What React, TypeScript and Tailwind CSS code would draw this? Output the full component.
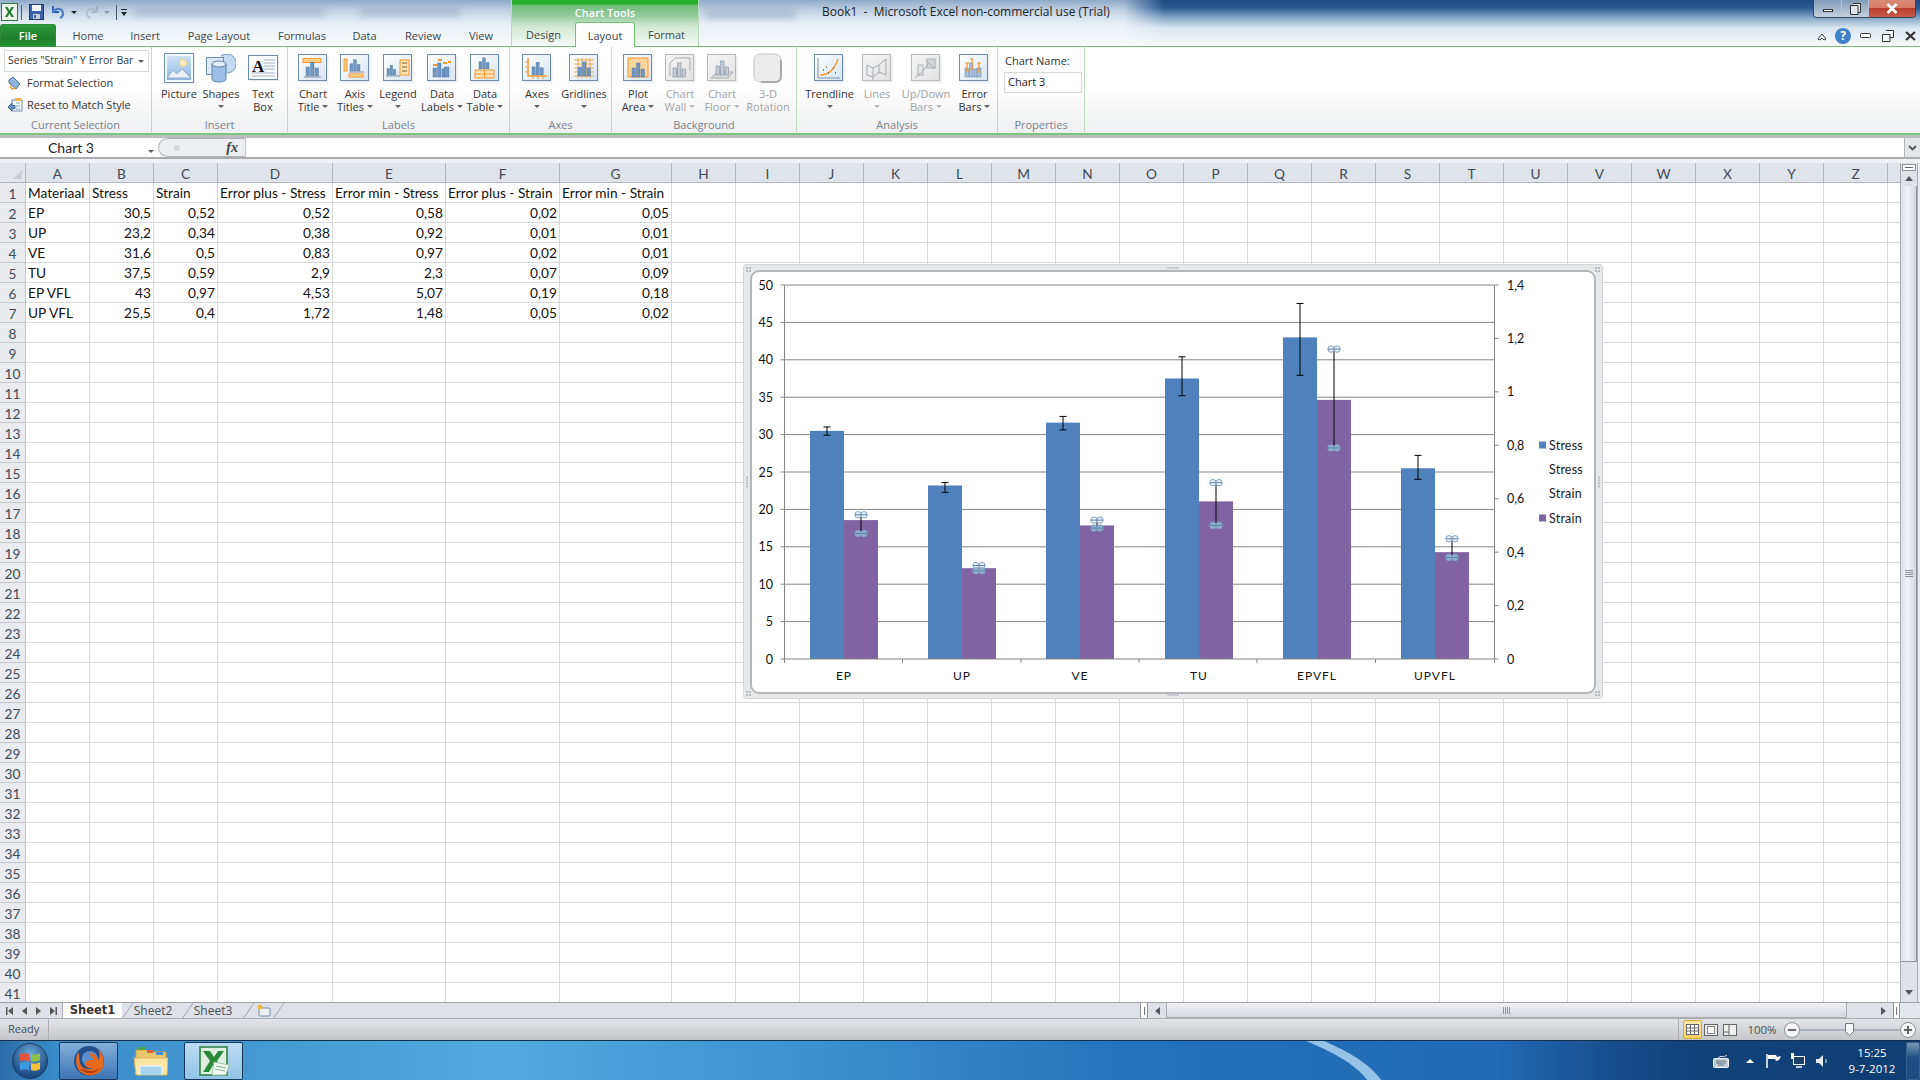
import { useId, type ReactNode } from "react";

type IconKind =
  | "title" | "axisTitles" | "legend" | "labels" | "table" | "axes" | "gridlines"
  | "plot" | "wall" | "floor" | "trend" | "lines" | "updown" | "errorbars";

const columns = ["A", "B", "C", "D", "E", "F", "G", "H", "I", "J", "K", "L", "M", "N", "O", "P", "Q", "R", "S", "T", "U", "V", "W", "X", "Y", "Z"];

const sheet: (string | null)[][] = [
  ["Materiaal", "Stress", "Strain", "Error plus - Stress", "Error min - Stress", "Error plus - Strain", "Error min - Strain"],
  ["EP", "30,5", "0,52", "0,52", "0,58", "0,02", "0,05"],
  ["UP", "23,2", "0,34", "0,38", "0,92", "0,01", "0,01"],
  ["VE", "31,6", "0,5", "0,83", "0,97", "0,02", "0,01"],
  ["TU", "37,5", "0,59", "2,9", "2,3", "0,07", "0,09"],
  ["EP VFL", "43", "0,97", "4,53", "5,07", "0,19", "0,18"],
  ["UP VFL", "25,5", "0,4", "1,72", "1,48", "0,05", "0,02"],
];

const series = [
  { name: "EP", label: "EP", x: 810, stress: 30.5, strain: 0.52, sp: 0.52, sm: 0.58, tp: 0.02, tm: 0.05 },
  { name: "UP", label: "UP", x: 928, stress: 23.2, strain: 0.34, sp: 0.38, sm: 0.92, tp: 0.01, tm: 0.01 },
  { name: "VE", label: "VE", x: 1046, stress: 31.6, strain: 0.5, sp: 0.83, sm: 0.97, tp: 0.02, tm: 0.01 },
  { name: "TU", label: "TU", x: 1165, stress: 37.5, strain: 0.59, sp: 2.9, sm: 2.3, tp: 0.07, tm: 0.09 },
  { name: "EPVFL", label: "EP VFL", x: 1283, stress: 43, strain: 0.97, sp: 4.53, sm: 5.07, tp: 0.19, tm: 0.18 },
  { name: "UPVFL", label: "UP VFL", x: 1401, stress: 25.5, strain: 0.4, sp: 1.72, sm: 1.48, tp: 0.05, tm: 0.02 },
];

const PLOT = { left: 784.5, right: 1494.5, top: 284.5, bottom: 658.5 };
const yStress = (v: number) => PLOT.bottom - (v / 50) * (PLOT.bottom - PLOT.top);
const yStrain = (v: number) => PLOT.bottom - (v / 1.4) * (PLOT.bottom - PLOT.top);

function Caret({ muted }: { muted?: boolean }) {
  return (
    <span className={`inline-block h-0 w-0 border-x-[3px] border-t-[3px] border-x-transparent ${muted ? "border-t-[#b5b8bc]" : "border-t-[#5a5f66]"}`} />
  );
}

function MiniBars({ x, y, color, scale = 1 }: { x: number; y: number; color: string; scale?: number }) {
  const heights = [9, 14, 8];
  return (
    <g>
      {heights.map((h, i) => (
        <rect key={i} x={x + i * 4.5 * scale} y={y - h * scale} width={3.5 * scale} height={h * scale} fill={color} stroke="#4d7199" strokeWidth={0.4} />
      ))}
    </g>
  );
}

function ChartIcon({ kind, disabled }: { kind: IconKind; disabled?: boolean }) {
  const id = useId();
  const bar = disabled ? "#c9cbce" : "#6f97c4";
  const accent = disabled ? "#c4c6c8" : "#f39a2c";
  const thin = disabled ? "#a9acb0" : "#7a8ea6";
  let inner: ReactNode = null;
  switch (kind) {
    case "title":
      inner = (<><rect x="5" y="4.500" width="18" height="4" fill="#fbd08a" stroke={accent} /><MiniBars x={8} y={22} color={bar} /><path d="M6 23h17" stroke={thin} /></>);
      break;
    case "axisTitles":
      inner = (<><rect x="4" y="5" width="3" height="12" fill="#fbd08a" stroke={accent} /><rect x="9" y="20" width="14" height="3" fill="#fbd08a" stroke={accent} /><MiniBars x={10} y={17} color={bar} scale={0.8} /><path d="M9 18h15" stroke={thin} /></>);
      break;
    case "legend":
      inner = (<><rect x="17" y="6" width="9" height="15" fill="#fde3b5" stroke={accent} /><path d="M19 9h5M19 13h5M19 17h5" stroke="#8a5a22" /><MiniBars x={4} y={21} color={bar} scale={0.7} /><path d="M3 22h14" stroke={thin} /></>);
      break;
    case "labels":
      inner = (<><MiniBars x={6} y={23} color={bar} scale={1} /><rect x="17" y="13" width="5" height="10" fill={bar} stroke="#4d7199" strokeWidth="0.4" /><path d="M6 11h4M11 6h4M16 9h4M21 8h3" stroke={accent} strokeWidth="2" /></>);
      break;
    case "table":
      inner = (<><MiniBars x={9} y={15} color={bar} scale={0.8} /><rect x="5" y="16" width="19" height="8" fill="#fde3b5" stroke={accent} /><path d="M5 20h19M14.500 16v8" stroke={accent} /></>);
      break;
    case "axes":
      inner = (<><MiniBars x={10} y={21} color={bar} scale={0.9} /><path d="M6 4v18h19" fill="none" stroke={accent} strokeWidth="1.500" /><path d="M3 8h3M3 13h3M3 18h3M11 22v3M16 22v3M21 22v3" stroke={accent} /></>);
      break;
    case "gridlines":
      inner = (<><path d="M5 6h20M5 10h20M5 14h20M5 18h20M5 22h20M9 4v20M13 4v20M17 4v20M21 4v20" stroke={accent} strokeWidth="0.800" /><MiniBars x={9} y={22} color={bar} /></>);
      break;
    case "plot":
      inner = (<><rect x="5" y="4" width="20" height="19" fill="#fcd59a" stroke={accent} /><MiniBars x={9} y={23} color={bar} /></>);
      break;
    case "wall":
      inner = (<><path d="M5 22V9l5-5h15v13" fill="none" stroke={thin} /><MiniBars x={8} y={23} color={bar} /></>);
      break;
    case "floor":
      inner = (<><path d="M4 24l6-6h16l-5 6z" fill="#ddd" stroke={thin} /><MiniBars x={9} y={21} color={bar} /></>);
      break;
    case "trend":
      inner = (<><path d="M4 4v20h22" fill="none" stroke={thin} /><path d="M6 21c8 0 14-4 18-16" fill="none" stroke={accent} strokeWidth="1.300" /><path d="M9 16h1M14 19h1M19 14h1M21 19h1M12 13h1" stroke="#222" strokeWidth="1.200" /></>);
      break;
    case "lines":
      inner = <path d="M5 21V11l6 3 6-3 7-6v16l-7-3-6 5zM11 14v12M17 11v9" fill="none" stroke={thin} />;
      break;
    case "updown":
      inner = (<><rect x="16" y="5" width="8" height="9" fill="#d5d6d8" stroke={thin} /><rect x="7" y="11" width="5" height="10" fill="#e5e6e8" stroke={thin} /><path d="M4 24l8-7 6-8 6 6" fill="none" stroke={thin} /></>);
      break;
    case "errorbars":
      inner = (<><MiniBars x={6} y={23} color="#a9c0dc" /><rect x="18" y="14" width="4" height="9" fill="#a9c0dc" stroke="#4d7199" strokeWidth="0.4" /><path d="M8 9v8M6 9h4M6 17h4M13 5v10M11 5h4M11 15h4M20 9v9M18 9h4M18 18h4" stroke={accent} strokeWidth="1.200" fill="none" /></>);
      break;
  }
  return (
    <svg width="31" height="29" viewBox="0 0 31 29" className="shrink-0">
      <defs>
        <linearGradient id={id} x1="0" y1="0" x2="1" y2="1">
          <stop offset="0" stopColor={disabled ? "#f5f5f5" : "#ffffff"} />
          <stop offset="1" stopColor={disabled ? "#e2e2e2" : "#d6e4f3"} />
        </linearGradient>
      </defs>
      <rect x="2" y="2" width="28.500" height="26.500" fill="#000" opacity="0.08" />
      <rect x="0.500" y="0.500" width="28" height="26" fill={`url(#${id})`} stroke={disabled ? "#b8b9bb" : "#6f8cad"} />
      {inner}
    </svg>
  );
}

function RibbonButton({ icon, lines, width, caret, disabled, soloCaret }: { icon: ReactNode; lines: string[]; width: string; caret?: boolean; disabled?: boolean; soloCaret?: boolean }) {
  return (
    <div className={`flex shrink-0 flex-col items-center ${width} ${disabled ? "text-[#a0a2a5]" : "text-[#333]"}`}>
      <div className="flex h-[30px] items-center justify-center">{icon}</div>
      <div className="mt-[4px] flex h-[13px] items-center whitespace-nowrap leading-[13px]">{lines[0]}</div>
      <div className="flex h-[13px] items-center gap-[3px] whitespace-nowrap leading-[13px]">
        {lines[1]}
        {(caret || soloCaret) && <Caret muted={disabled} />}
      </div>
    </div>
  );
}

function RibbonGroup({ label, width, children, padding = "pl-[5px]" }: { label: string; width: string; children: ReactNode; padding?: string }) {
  return (
    <div className={`flex h-full shrink-0 flex-col border-r border-[#bcdcbd] ${width}`}>
      <div className={`flex h-[70px] pt-[6px] ${padding}`}>{children}</div>
      <div className="mt-auto pb-px text-center leading-[14px] text-[#76828f]">{label}</div>
    </div>
  );
}

function PictureIcon() {
  return (
    <svg width="31" height="31" viewBox="0 0 31 31">
      <defs>
        <linearGradient id="picSky" x1="0" y1="0" x2="0" y2="1">
          <stop offset="0" stopColor="#cfe2f6" />
          <stop offset="1" stopColor="#8db6e0" />
        </linearGradient>
      </defs>
      <rect x="2" y="2" width="29" height="29" fill="#000" opacity="0.08" />
      <rect x="0.500" y="0.500" width="29" height="29" fill="#f4f8fc" stroke="#6f8fb3" />
      <rect x="3" y="3" width="24" height="24" fill="url(#picSky)" />
      <circle cx="19" cy="10" r="3.500" fill="#fff3c4" stroke="#eecf7c" />
      <path d="M3 25l6-8 4 4 5-5 9 9z" fill="#e8f0f8" stroke="#93aecd" />
    </svg>
  );
}

function ShapesIcon() {
  return (
    <svg width="30" height="29" viewBox="0 0 30 29">
      <path d="M15 2a9.500 9.500 0 1 1 6 17" fill="#c4daf2" stroke="#6f8fb3" />
      <rect x="0.500" y="3.500" width="17" height="17" fill="#dce9f7" stroke="#6f8fb3" />
      <path d="M6 10v15c0 4 14 4 14 0V10z" fill="#9cc0e6" stroke="#5f82aa" />
      <ellipse cx="13" cy="10" rx="7" ry="3" fill="#e2eefa" stroke="#5f82aa" />
    </svg>
  );
}

function TextBoxIcon() {
  return (
    <svg width="31" height="26" viewBox="0 0 31 26">
      <rect x="2" y="2" width="29" height="24" fill="#000" opacity="0.08" />
      <rect x="0.500" y="0.500" width="29" height="24" fill="#fbfcfe" stroke="#6f8cad" />
      <text x="4" y="17" fontFamily="Liberation Serif, serif" fontWeight="700" fontSize="17" fill="#111">A</text>
      <path d="M16 5h11M16 8h11M16 11h11M16 14h11M4 18h23M4 21h23" stroke="#a4b3c4" />
    </svg>
  );
}

function RotationIcon() {
  return (
    <svg width="30" height="30" viewBox="0 0 30 30">
      <rect x="1" y="1" width="27" height="28" rx="6" fill="#ececec" stroke="#c2c3c5" />
      <path d="M28 7v16c0 4-2 6-6 6H8" fill="none" stroke="#a8a9ab" strokeWidth="2" />
    </svg>
  );
}

function QuickAccess() {
  return (
    <div className="flex h-[24px] items-center">
      <svg width="17" height="18" viewBox="0 0 17 18" className="ml-[1px]">
        <rect x="0.500" y="0.500" width="16" height="17" fill="#eaf4ea" stroke="#2f7d38" />
        <path d="M4 4l3 5-3 5h2.500l2-3.500 2 3.500H13l-3.200-5L13 4h-2.500L8.500 7.500 6.500 4z" fill="#1e7a2c" />
      </svg>
      <span className="ml-[3px] h-[15px] w-px bg-[#4a5a6b]" />
      <svg width="15" height="16" viewBox="0 0 15 16" className="ml-[7px]">
        <rect x="0.500" y="0.500" width="14" height="15" fill="#3a62a8" stroke="#1e3a6e" />
        <rect x="3" y="1" width="9" height="6" fill="#f4f7fb" />
        <rect x="4" y="10" width="7" height="5" fill="#c7cbd2" />
        <rect x="5" y="11" width="2" height="3" fill="#3a62a8" />
      </svg>
      <svg width="16" height="16" viewBox="0 0 16 16" className="ml-[6px]">
        <path d="M3 2v6h6" fill="none" stroke="#2f62a8" strokeWidth="2" />
        <path d="M3 8c3-5 10-4 10 2 0 2-1 3-3 4" fill="none" stroke="#4a7fc4" strokeWidth="2.200" />
      </svg>
      <span className="ml-[5px]"><span className="block h-0 w-0 border-x-[3px] border-t-[3px] border-x-transparent border-t-[#222]" /></span>
      <svg width="16" height="16" viewBox="0 0 16 16" className="ml-[7px] opacity-50">
        <path d="M13 2v6H7" fill="none" stroke="#8b99a8" strokeWidth="2" />
        <path d="M13 8C10 3 3 4 3 10c0 2 1 3 3 4" fill="none" stroke="#9aa8b6" strokeWidth="2.200" />
      </svg>
      <span className="ml-[4px]"><span className="block h-0 w-0 border-x-[3px] border-t-[3px] border-x-transparent border-t-[#8c97a3]" /></span>
      <span className="ml-[6px] h-[15px] w-px bg-[#4a5a6b]" />
      <span className="ml-[4px] flex flex-col items-center gap-[2px]">
        <span className="h-px w-[6px] bg-[#222]" />
        <span className="block h-0 w-0 border-x-[3px] border-t-[4px] border-x-transparent border-t-[#222]" />
      </span>
    </div>
  );
}

function Tab({ label, width, active }: { label: string; width: string; active?: boolean }) {
  return (
    <div className={`flex shrink-0 items-center justify-center pt-[2px] ${width} ${active ? "mb-[-1px] h-[25px] rounded-t-[3px] border-x border-t border-[#72c172] bg-[#fdfefd]" : "h-[24px]"} text-[#3f444a]`}>
      {label}
    </div>
  );
}

function TitleBar() {
  return (
    <div className="relative z-10 flex h-[47px] shrink-0 border-b border-[#6fbe72] bg-[linear-gradient(180deg,#8eaac8_0px,#c2d3e5_11px,#e8eff6_24px,#f8fafc_46px)] [font-family:'Open_Sans',sans-serif] text-[11px]">
      <div className="relative flex w-[511px] shrink-0 flex-col">
        <div className="absolute left-[135px] top-[9px] h-[7px] w-[190px] bg-[#5f7c9c]/30 blur-[3px]" />
        <div className="absolute left-[360px] top-[9px] h-[7px] w-[100px] bg-[#5f7c9c]/30 blur-[3px]" />
        <div className="relative">
          <QuickAccess />
        </div>
        <div className="relative flex h-[23px] items-end">
          <div className="flex h-[23px] w-[56px] shrink-0 items-center justify-center rounded-t-[3px] border border-b-0 border-[#2f8b3a] bg-[linear-gradient(180deg,#2e9a3c,#1f7d2d_60%,#2a9639)] pt-px font-semibold text-white">
            File
          </div>
          <Tab label="Home" width="w-[64px]" />
          <Tab label="Insert" width="w-[50px]" />
          <Tab label="Page Layout" width="w-[98px]" />
          <Tab label="Formulas" width="w-[68px]" />
          <Tab label="Data" width="w-[57px]" />
          <Tab label="Review" width="w-[60px]" />
          <Tab label="View" width="w-[56px]" />
        </div>
      </div>
      <div className="flex w-[188px] shrink-0 flex-col border-x border-[#b6dcb8] bg-[linear-gradient(180deg,#22b026_0px,#22b026_4px,#6dbb78_5px,#94cc9c_16px,#cfe8d3_26px,#f6fbf7_46px)]">
        <div className="flex h-[24px] items-center justify-center pt-[4px] font-semibold text-white">Chart Tools</div>
        <div className="flex h-[23px] items-end">
          <Tab label="Design" width="w-[63px]" />
          <Tab label="Layout" width="w-[60px]" active />
          <Tab label="Format" width="w-[63px]" />
        </div>
      </div>
      <div className="relative flex min-w-0 flex-1 flex-col">
        <div className="absolute inset-0 bg-[linear-gradient(180deg,#21497f_0px,#2a5a92_8px,#7ea2c5_17px,#dbe6f0_28px,#f6f8fb_46px)] [mask-image:linear-gradient(90deg,transparent_425px,black_465px)]" />
        <div className="absolute left-[6px] top-[10px] h-[8px] w-[90px] bg-[#5f7c9c]/30 blur-[3px]" />
        <div className="relative flex h-[24px] items-start">
          <div className="pl-[123px] pt-[3px] text-[12px] leading-[18px] whitespace-nowrap text-[#222]">Book1&nbsp; -&nbsp; Microsoft Excel non-commercial use (Trial)</div>
          <div className="ml-auto mr-[4px] flex h-[18px] overflow-hidden rounded-b-[4px] border border-t-0 border-[#33475f]">
            <div className="flex w-[28px] items-center justify-center border-r border-[#b5c3d2] bg-[linear-gradient(180deg,#7f9ab8,#c6d3e0)]"><span className="mt-[4px] h-[3px] w-[10px] border border-[#333] bg-white" /></div>
            <div className="flex w-[27px] items-center justify-center border-r border-[#b5c3d2] bg-[linear-gradient(180deg,#7f9ab8,#c6d3e0)]">
              <svg width="11" height="12" viewBox="0 0 11 12"><path d="M3 .5h7.500v9H8M.5 2.500h7.500v9H.5z" fill="#dfe6ee" stroke="#333" /></svg>
            </div>
            <div className="flex w-[46px] items-center justify-center bg-[linear-gradient(180deg,#d88a76_0%,#d87f6a_45%,#b8402c_50%,#c95a46_100%)]">
              <svg width="12" height="11" viewBox="0 0 12 11"><path d="M1.500 1l9 9M10.500 1l-9 9" stroke="#fff" strokeWidth="2.600" /></svg>
            </div>
          </div>
        </div>
        <div className="relative flex h-[22px] items-center justify-end pr-[4px] pt-[2px] text-[#444]">
          <svg width="10" height="9" viewBox="0 0 10 9"><path d="M1 7l4-5 4 5-2 1-2-2-2 2z" fill="#fff" stroke="#333" /></svg>
          <span className="ml-[8px] flex h-[16px] w-[16px] items-center justify-center rounded-full bg-[#3f82c8] text-[12px] font-bold leading-none text-white">?</span>
          <svg width="12" height="6" viewBox="0 0 12 6" className="ml-[9px]"><rect x="0.500" y="0.500" width="10" height="4" rx="1" fill="#fff" stroke="#333" /></svg>
          <svg width="12" height="13" viewBox="0 0 12 13" className="ml-[10px]"><path d="M4 .5h7.500v7H8M.5 4.500h7.500v7H.5z" fill="#f2f5f8" stroke="#333" /></svg>
          <svg width="11" height="10" viewBox="0 0 11 10" className="ml-[11px]"><path d="M1 1l9 8M10 1L1 9" stroke="#333" strokeWidth="2.200" /></svg>
        </div>
      </div>
    </div>
  );
}

function Ribbon() {
  return (
    <div className="flex h-[86px] shrink-0 bg-[linear-gradient(180deg,#fff_0%,#fff_50%,#f7f7f7_70%,#eff0f2_100%)] [font-family:'Open_Sans',sans-serif] text-[11px]">
      <div className="flex h-full w-[152px] shrink-0 flex-col border-r border-[#bcdcbd]">
        <div className="ml-[4px] mt-[3px] flex h-[22px] w-[145px] items-center justify-between border border-[#d5d8db] bg-white pl-[3px] pr-[4px] text-[10.5px] whitespace-nowrap text-[#333]">
          Series "Strain" Y Error Bar
          <Caret />
        </div>
        <div className="mt-px flex h-[20px] items-center gap-[4px] pl-[7px] text-[#333]">
          <svg width="16" height="16" viewBox="0 0 16 16"><path d="M2 5l4-3 7 7-4 5-7-6z" fill="#8fb3dc" stroke="#4b6f9c" /><path d="M3 11l2 3 3-1" fill="none" stroke="#e2a23b" strokeWidth="1.500" /></svg>
          Format Selection
        </div>
        <div className="mt-[2px] flex h-[20px] items-center gap-[4px] pl-[7px] text-[#333]">
          <svg width="16" height="16" viewBox="0 0 16 16"><rect x="5" y="3" width="10" height="11" fill="#f4f7fb" stroke="#6f8cad" /><path d="M9 6h4M9 9h4M9 12h4" stroke="#8aa" /><path d="M1 10l4-4v2.500h3v3H5V14z" fill="#6b93c8" stroke="#3f6592" /><rect x="8" y="1" width="6" height="3" fill="#e7b64c" /></svg>
          Reset to Match Style
        </div>
        <div className="mt-auto pb-px text-center leading-[14px] text-[#76828f]">Current Selection</div>
      </div>
      <RibbonGroup label="Insert" width="w-[136px]" padding="pl-[6px]">
        <RibbonButton width="w-[42px]" icon={<PictureIcon />} lines={["Picture", "\u00a0"]} />
        <RibbonButton width="w-[42px]" icon={<ShapesIcon />} lines={["Shapes", ""]} soloCaret />
        <RibbonButton width="w-[42px]" icon={<TextBoxIcon />} lines={["Text", "Box"]} />
      </RibbonGroup>
      <RibbonGroup label="Labels" width="w-[222px]" padding="pl-[4px]">
        <RibbonButton width="w-[42px]" icon={<ChartIcon kind="title" />} lines={["Chart", "Title"]} caret />
        <RibbonButton width="w-[42px]" icon={<ChartIcon kind="axisTitles" />} lines={["Axis", "Titles"]} caret />
        <RibbonButton width="w-[44px]" icon={<ChartIcon kind="legend" />} lines={["Legend", ""]} soloCaret />
        <RibbonButton width="w-[44px]" icon={<ChartIcon kind="labels" />} lines={["Data", "Labels"]} caret />
        <RibbonButton width="w-[42px]" icon={<ChartIcon kind="table" />} lines={["Data", "Table"]} caret />
      </RibbonGroup>
      <RibbonGroup label="Axes" width="w-[102px]">
        <RibbonButton width="w-[44px]" icon={<ChartIcon kind="axes" />} lines={["Axes", ""]} soloCaret />
        <RibbonButton width="w-[50px]" icon={<ChartIcon kind="gridlines" />} lines={["Gridlines", ""]} soloCaret />
      </RibbonGroup>
      <RibbonGroup label="Background" width="w-[185px]">
        <RibbonButton width="w-[42px]" icon={<ChartIcon kind="plot" />} lines={["Plot", "Area"]} caret />
        <RibbonButton width="w-[42px]" icon={<ChartIcon kind="wall" disabled />} lines={["Chart", "Wall"]} caret disabled />
        <RibbonButton width="w-[42px]" icon={<ChartIcon kind="floor" disabled />} lines={["Chart", "Floor"]} caret disabled />
        <RibbonButton width="w-[50px]" icon={<RotationIcon />} lines={["3-D", "Rotation"]} disabled />
      </RibbonGroup>
      <RibbonGroup label="Analysis" width="w-[201px]">
        <RibbonButton width="w-[55px]" icon={<ChartIcon kind="trend" />} lines={["Trendline", ""]} soloCaret />
        <RibbonButton width="w-[40px]" icon={<ChartIcon kind="lines" disabled />} lines={["Lines", ""]} soloCaret disabled />
        <RibbonButton width="w-[58px]" icon={<ChartIcon kind="updown" disabled />} lines={["Up/Down", "Bars"]} caret disabled />
        <RibbonButton width="w-[39px]" icon={<ChartIcon kind="errorbars" />} lines={["Error", "Bars"]} caret />
      </RibbonGroup>
      <div className="flex h-full w-[87px] shrink-0 flex-col border-r border-[#bcdcbd]">
        <div className="mt-[6px] pl-[7px] leading-[16px] text-[#333]">Chart Name:</div>
        <div className="ml-[6px] mt-[3px] flex h-[21px] w-[78px] items-center border border-[#d5d8db] bg-white px-[3px] text-[#222]">Chart 3</div>
        <div className="mt-auto pb-px text-center leading-[14px] text-[#76828f]">Properties</div>
      </div>
    </div>
  );
}

function FormulaBar() {
  return (
    <div className="flex h-[30px] shrink-0 flex-col">
      <div className="h-[2px] bg-[#7dc57f]" />
      <div className="h-[3px] bg-[#b9bdc2]" />
      <div className="flex h-[21px] border-b-[2px] border-[#a9adb2] bg-white">
        <div className="flex w-[158px] items-center [font-family:Lato,sans-serif] text-[14px] text-[#222]">
          <span className="w-[142px] text-center">Chart 3</span>
          <span className="ml-[6px]"><Caret /></span>
        </div>
        <div className="flex w-[87px] items-center justify-end rounded-l-full border-y border-l border-[#b0b4b9] bg-[#eceef1] pr-[7px]">
          <span className="mr-[46px] h-[6px] w-[6px] rounded-full bg-[#d5d8dc]" />
          <span className="[font-family:'Liberation_Serif',serif] text-[14px] font-bold italic leading-none text-[#444]">fx</span>
        </div>
        <div className="flex-1 border-l border-[#c5c8cc]" />
        <div className="flex w-[16px] items-center justify-center border-l border-[#b0b4b9] bg-[#e4e6ea]">
          <svg width="9" height="6" viewBox="0 0 9 6"><path d="M1 1l3.500 3.500L8 1" fill="none" stroke="#555" strokeWidth="1.800" /></svg>
        </div>
      </div>
      <div className="h-[4px] bg-[#eef0f3]" />
    </div>
  );
}

function ErrorBar({ x, top, bottom }: { x: number; top: number; bottom: number }) {
  return <path d={`M${x} ${top}V${bottom}M${x - 3.500} ${top}h7M${x - 3.500} ${bottom}h7`} stroke="#000" strokeWidth="1" fill="none" />;
}

function Handle({ x, y, filled }: { x: number; y: number; filled?: boolean }) {
  const fill = filled ? "#8fb0cf" : "#eaf2fa";
  return (
    <g stroke="#7ea3c5" strokeWidth="1" fill={fill}>
      <circle cx={x - 3} cy={y} r={3.200} />
      <circle cx={x + 3} cy={y} r={3.200} />
      <path d={`M${x - 6} ${y}h12`} stroke="#5f7f9f" />
    </g>
  );
}

function ChartSvg() {
  const stressTicks = [0, 5, 10, 15, 20, 25, 30, 35, 40, 45, 50];
  const strainTicks = ["0", "0,2", "0,4", "0,6", "0,8", "1", "1,2", "1,4"];
  const catTicks = [784.5, 902.5, 1021, 1139, 1257, 1375.5, 1494.5];
  const legend = [
    { y: 445, text: "Stress", color: "#4f81bd" },
    { y: 469, text: "Stress" },
    { y: 493, text: "Strain" },
    { y: 518, text: "Strain", color: "#8064a2" },
  ];
  return (
    <svg width="844" height="420" viewBox="752 271.500 844 420" className="block [font-family:Lato,sans-serif]">
      {stressTicks.slice(1).map((t) => (
        <path key={t} d={`M${PLOT.left} ${yStress(t)}H${PLOT.right}`} stroke="#868686" strokeWidth="1" />
      ))}
      {series.map((s) => (
        <g key={s.name}>
          <rect x={s.x} y={yStress(s.stress)} width={34} height={PLOT.bottom - yStress(s.stress)} fill="#4f81bd" />
          <rect x={s.x + 34} y={yStrain(s.strain)} width={34} height={PLOT.bottom - yStrain(s.strain)} fill="#8064a2" />
        </g>
      ))}
      <path d={`M${PLOT.left} ${PLOT.top - 0}V${PLOT.bottom}H${PLOT.right}V${PLOT.top}`} fill="none" stroke="#868686" strokeWidth="1" />
      {stressTicks.map((t) => (
        <g key={t}>
          <path d={`M${PLOT.left - 4} ${yStress(t)}h4`} stroke="#868686" />
          <text x="773" y={yStress(t) + 4.500} textAnchor="end" fontSize="12.5" fill="#111">{t}</text>
        </g>
      ))}
      {strainTicks.map((t, i) => {
        const y = yStrain(i * 0.2);
        return (
          <g key={t}>
            <path d={`M${PLOT.right} ${y}h4`} stroke="#868686" />
            <text x="1507" y={y + 4.500} fontSize="12.5" fill="#111">{t}</text>
          </g>
        );
      })}
      {catTicks.map((x) => (
        <path key={x} d={`M${x} ${PLOT.bottom}v4`} stroke="#868686" />
      ))}
      {series.map((s) => {
        const bx = s.x + 17;
        const px = s.x + 51;
        const top = yStrain(s.strain + s.tp);
        const bottom = yStrain(s.strain - s.tm);
        return (
          <g key={s.name}>
            <ErrorBar x={bx} top={yStress(s.stress + s.sp)} bottom={yStress(s.stress - s.sm)} />
            <path d={`M${px} ${top}V${bottom}`} stroke="#000" />
            <Handle x={px} y={top} />
            <Handle x={px} y={bottom} filled />
            <text x={s.x + 34} y="679" textAnchor="middle" fontSize="12" letterSpacing="1" wordSpacing="-3.500" fill="#111">{s.label}</text>
          </g>
        );
      })}
      {legend.map((l) => (
        <g key={l.y}>
          {l.color && <rect x="1539" y={l.y - 4} width="7" height="7" fill={l.color} />}
          <text x="1549" y={l.y + 4} fontSize="12.5" letterSpacing="0.200" fill="#222">{l.text}</text>
        </g>
      ))}
    </svg>
  );
}

function GripDots({ vertical }: { vertical?: boolean }) {
  return (
    <span className={`flex gap-px ${vertical ? "flex-col" : ""}`}>
      <span className="h-[2px] w-[2px] bg-[#b9bdc3]" />
      <span className="h-[2px] w-[2px] bg-[#b9bdc3]" />
      <span className="h-[2px] w-[2px] bg-[#b9bdc3]" />
      <span className="h-[2px] w-[2px] bg-[#b9bdc3]" />
    </span>
  );
}

function CornerDots({ place }: { place: string }) {
  return (
    <span className={`absolute grid grid-cols-2 gap-px ${place}`}>
      <span className="h-[2px] w-[2px] bg-[#b9bdc3]" />
      <span className="h-[2px] w-[2px] bg-[#b9bdc3]" />
      <span className="h-[2px] w-[2px] bg-[#b9bdc3]" />
      <span className="h-[2px] w-[2px] bg-[#b9bdc3]" />
    </span>
  );
}

function ChartObject() {
  return (
    <div className="absolute left-[744px] top-[102px] flex h-[433px] w-[858px] items-center justify-center rounded-[3px] border-[6px] border-[#e6e8ea] bg-[#eef0f2] shadow-[0_0_0_1px_#d3d5d8]">
      <div className="overflow-hidden rounded-[9px] border-2 border-[#b4b6b9] bg-white">
        <ChartSvg />
      </div>
      <span className="absolute left-1/2 top-[-4px] -translate-x-1/2"><GripDots /></span>
      <span className="absolute bottom-[-4px] left-1/2 -translate-x-1/2"><GripDots /></span>
      <span className="absolute left-[-4px] top-1/2 -translate-y-1/2"><GripDots vertical /></span>
      <span className="absolute right-[-4px] top-1/2 -translate-y-1/2"><GripDots vertical /></span>
      <CornerDots place="left-[-4px] top-[-4px]" />
      <CornerDots place="right-[-4px] top-[-4px]" />
      <CornerDots place="bottom-[-4px] left-[-4px]" />
      <CornerDots place="bottom-[-4px] right-[-4px]" />
    </div>
  );
}

function SheetGrid() {
  const rows = Array.from({ length: 41 }, (_, i) => i);
  return (
    <div className="relative grid min-w-0 flex-1 grid-cols-[26px_64px_64px_64px_115px_113px_114px_112px_repeat(19,64px)_12px] auto-rows-[20px] content-start overflow-hidden bg-white [font-family:Lato,sans-serif] text-[13.7px] leading-[19px] text-[#111]">
      <div className="flex items-end justify-end border-b border-r border-[#b3b7bd] bg-[#e2e5ea] pb-[3px] pr-[3px]">
        <span className="h-0 w-0 border-b-[9px] border-l-[9px] border-b-[#c9ccd1] border-l-transparent" />
      </div>
      {columns.map((c) => (
        <div key={c} className="flex items-center justify-center border-b border-r border-[#b3b7bd] bg-[#dfe3ea] pt-px text-[#3f4a57]">{c}</div>
      ))}
      <div className="border-b border-[#b3b7bd] bg-[#dfe3ea]" />
      {rows.map((r) => (
        <RowCells key={r} index={r} />
      ))}
      <ChartObject />
    </div>
  );
}

function RowCells({ index }: { index: number }) {
  const data = sheet[index];
  return (
    <>
      <div className="flex items-center justify-center border-b border-r border-[#c5c8cd] bg-[#e9ebef] pt-px text-[#3f4a57]">{index + 1}</div>
      {columns.map((c, i) => {
        const value = data ? data[i] : undefined;
        const numeric = !!value && index > 0 && i > 0;
        return (
          <div key={c} className={`overflow-visible whitespace-nowrap border-b border-r border-[#d9d9d9] px-[2px] ${numeric ? "text-right" : ""}`}>{value}</div>
        );
      })}
      <div className="border-b border-[#d9d9d9]" />
    </>
  );
}

function VerticalScroll() {
  return (
    <div className="flex w-[20px] shrink-0 border-l border-[#a9adb2] bg-[#dfe2e9]">
      <div className="flex w-[16px] shrink-0 flex-col items-center">
        <div className="mt-[1px] flex h-[7px] w-[14px] items-center justify-center border border-[#8f949b] bg-white"><span className="h-px w-[8px] bg-[#666]" /></div>
        <span className="mt-[5px] h-0 w-0 border-x-[4px] border-b-[5px] border-x-transparent border-b-[#555]" />
        <div className="mt-[5px] flex h-[776px] w-full items-center justify-center border-b border-r border-[#8e939a] bg-[linear-gradient(90deg,#dde1e7,#f1f3f6_45%,#d2d6dc)]">
          <span className="flex flex-col gap-px">
            <span className="h-px w-[8px] bg-[#8d9198]" />
            <span className="h-px w-[8px] bg-[#8d9198]" />
            <span className="h-px w-[8px] bg-[#8d9198]" />
            <span className="h-px w-[8px] bg-[#8d9198]" />
          </span>
        </div>
        <span className="mt-auto mb-[7px] h-0 w-0 border-x-[4px] border-t-[5px] border-x-transparent border-t-[#555]" />
      </div>
      <div className="w-px shrink-0 bg-[#a9adb2]" />
      <div className="flex-1 bg-[#e9ebef]" />
    </div>
  );
}

function Slant() {
  return (
    <svg width="11" height="16" viewBox="0 0 11 16" className="shrink-0">
      <path d="M0 16L11 0" stroke="#a3a7ad" fill="none" />
    </svg>
  );
}

function SheetTabs() {
  return (
    <div className="flex h-[16px] shrink-0 border-t border-[#a0a4a9] bg-[#dee1e7] [font-family:'Open_Sans',sans-serif] text-[12px] text-[#4a4f56]">
      <div className="flex w-[63px] shrink-0 items-center border-r border-[#a9adb2] pl-[6px] text-[#444]">
        <svg width="52" height="10" viewBox="0 0 52 10" fill="#555">
          <path d="M0 1h1.500v8H0zM7 1v8L2 5z" />
          <path d="M21 1v8l-5-4z" />
          <path d="M30 1v8l5-4z" />
          <path d="M44 1v8l5-4zM49.500 1H51v8h-1.500z" />
        </svg>
      </div>
      <div className="flex w-[59px] shrink-0 items-center justify-center bg-white font-bold text-[#333] [font-family:'DejaVu_Sans',sans-serif] text-[11.5px]">Sheet1</div>
      <Slant />
      <div className="flex w-[49px] shrink-0 items-center justify-center pr-[9px]">Sheet2</div>
      <Slant />
      <div className="flex w-[50px] shrink-0 items-center justify-center pr-[10px]">Sheet3</div>
      <Slant />
      <div className="flex w-[19px] shrink-0 items-center justify-center">
        <svg width="14" height="13" viewBox="0 0 14 13"><rect x="2" y="4" width="11" height="8" rx="1" fill="#eef2f7" stroke="#6f8cad" /><circle cx="3" cy="3" r="2.500" fill="#f0b93f" /></svg>
      </div>
      <Slant />
      <div className="flex-1" />
      <div className="flex w-[8px] shrink-0 items-center justify-center border-x border-[#8f949b] bg-white"><span className="h-[8px] w-px bg-[#777]" /></div>
      <div className="flex w-[18px] shrink-0 items-center justify-center"><span className="h-0 w-0 border-y-[4px] border-r-[5px] border-y-transparent border-r-[#555]" /></div>
      <div className="flex w-[681px] shrink-0 items-center justify-center border-b border-l border-r border-[#a9adb2] bg-[linear-gradient(180deg,#f0f2f5,#d4d8de)]">
        <span className="flex gap-px">
          <span className="h-[7px] w-px bg-[#8d9198]" />
          <span className="h-[7px] w-px bg-[#8d9198]" />
          <span className="h-[7px] w-px bg-[#8d9198]" />
          <span className="h-[7px] w-px bg-[#8d9198]" />
        </span>
      </div>
      <div className="flex w-[46px] shrink-0 items-center justify-end pr-[7px]"><span className="h-0 w-0 border-y-[4px] border-l-[5px] border-y-transparent border-l-[#555]" /></div>
      <div className="flex w-[7px] shrink-0 items-center justify-center border-x border-[#8f949b] bg-white"><span className="h-[8px] w-px bg-[#777]" /></div>
      <div className="w-[20px] shrink-0 bg-[#e4e7ec]" />
    </div>
  );
}

function StatusBar() {
  return (
    <div className="flex h-[22px] shrink-0 items-center border-t border-[#a9adb2] bg-[linear-gradient(180deg,#e3e4e7,#d3d5d8_50%,#c3c5c9)] [font-family:'Open_Sans',sans-serif] text-[11px] text-[#4a4f56]">
      <div className="flex h-full w-[49px] items-center border-r border-[#a9adb2] pl-[8px]">Ready</div>
      <div className="ml-auto flex h-full items-center border-l border-[#a9adb2]">
        <div className="ml-[4px] flex h-[19px] w-[19px] items-center justify-center rounded-[2px] border border-[#d9a93c] bg-[linear-gradient(180deg,#fde9a9,#fbcf62)]">
          <svg width="13" height="11" viewBox="0 0 13 11"><rect x="0.500" y="0.500" width="12" height="10" fill="#fff" stroke="#666" /><path d="M0 4h13M0 7h13M4.500 0v11M8.500 0v11" stroke="#666" /></svg>
        </div>
        <div className="ml-[2px] flex h-[19px] w-[14px] items-center justify-center">
          <svg width="14" height="12" viewBox="0 0 14 12"><rect x="0.500" y="0.500" width="13" height="11" fill="#e8e9eb" stroke="#666" /><rect x="3.500" y="2.500" width="7" height="7" fill="#fff" stroke="#888" /></svg>
        </div>
        <div className="ml-[5px] flex h-[19px] w-[14px] items-center justify-center">
          <svg width="14" height="12" viewBox="0 0 14 12"><rect x="0.500" y="0.500" width="13" height="11" fill="#eee" stroke="#666" /><path d="M6 0v12M0 8h6" stroke="#666" /></svg>
        </div>
        <div className="ml-[7px] w-[36px] text-center text-[11.5px]">100%</div>
        <div className="ml-[4px] flex h-[16px] w-[16px] items-center justify-center rounded-full border border-[#8c9097] bg-[#f4f5f7]"><span className="h-[2px] w-[8px] bg-[#666]" /></div>
        <div className="relative h-[2px] w-[100px] bg-[#a9b2bc]">
          <svg width="9" height="13" viewBox="0 0 9 13" className="absolute left-[45px] top-[-6px]"><path d="M.5.5h8v8L4.500 12.500.5 8.500z" fill="#f5f6f8" stroke="#777" /></svg>
        </div>
        <div className="relative mr-[4px] flex h-[16px] w-[16px] items-center justify-center rounded-full border border-[#8c9097] bg-[#f4f5f7]">
          <span className="h-[2px] w-[8px] bg-[#666]" />
          <span className="absolute h-[8px] w-[2px] bg-[#666]" />
        </div>
      </div>
    </div>
  );
}

function FirefoxIcon() {
  return (
    <svg width="32" height="32" viewBox="0 0 32 32">
      <circle cx="16" cy="16" r="15" fill="#1f4f8e" />
      <circle cx="17" cy="14" r="8" fill="#5c8fcf" />
      <path d="M5 7c-3 7-3 16 4 21 7 5 18 2 21-6 2-7 0-14-5-18 2 4 2 8 0 11-1-4-4-7-8-7-1 3 3 3 3 7-3 0-7 0-8 3-1 4 4 6 8 5-5 3-12 0-13-5-1-4 0-8-2-11z" fill="#e8691c" />
      <path d="M7 24c5 6 16 6 21-2-4 4-11 5-15 3-3-1-5-1-6-1z" fill="#b83f12" />
    </svg>
  );
}

function ExplorerIcon() {
  return (
    <svg width="34" height="32" viewBox="0 0 34 32">
      <path d="M2 5h10l2 2h18v22H2z" fill="#e9c66d" stroke="#c7a045" />
      <rect x="4" y="2" width="7" height="3" fill="#4ea14a" />
      <rect x="13" y="5" width="6" height="3" fill="#d9653b" />
      <rect x="22" y="7" width="7" height="3" fill="#4a8fd6" />
      <path d="M0 13h34l-1 17H2z" fill="#fce6a4" stroke="#d9b65e" />
      <path d="M6 30v-9h22v9" fill="#a8d5ee" stroke="#eef8fc" />
    </svg>
  );
}

function ExcelTaskIcon() {
  return (
    <svg width="32" height="32" viewBox="0 0 32 32">
      <rect x="2" y="2" width="27" height="28" fill="#dff0df" stroke="#2a7d37" strokeWidth="1.500" />
      <path d="M5 6h7l4 6 4-6h6l-7 10 7 11h-7l-4-7-4 7H5l7-11z" fill="#2a8a3a" />
      <path d="M16 17l15 3-3 10H14z" fill="#f4faf4" stroke="#9cc7a2" />
      <path d="M18 21l10 2M17 24l10 2" stroke="#7fb98a" />
    </svg>
  );
}

function TaskButton({ children, active }: { children: ReactNode; active?: boolean }) {
  return (
    <div className={`flex h-[38px] w-[59px] shrink-0 items-center justify-center rounded-[2px] border border-[#16365c] ${active ? "bg-[linear-gradient(180deg,#bcdcf2,#93c4e6)]" : "bg-[linear-gradient(180deg,#82aedb,#3d76b5)]"}`}>
      {children}
    </div>
  );
}

function Taskbar() {
  return (
    <div className="relative flex h-[40px] shrink-0 items-center border-t border-[#15304f] bg-[linear-gradient(90deg,#2b6ca8_0px,#3a8cc8_55px,#52a9dd_500px,#3d92cf_800px,#2473bb_1120px,#2268b3_1500px,#164e8c_1610px,#10427a_1695px,#0f3d73_100%)] [font-family:'Open_Sans',sans-serif]">
      <svg width="90" height="40" viewBox="0 0 90 40" className="absolute left-[1300px] top-0">
        <path d="M6 0C30 10 55 22 68 40H82C68 20 42 8 24 0z" fill="#a9d2f0" opacity="0.85" />
      </svg>
      <div className="relative flex w-[59px] shrink-0 justify-center">
        <div className="flex h-[36px] w-[36px] items-center justify-center rounded-full border border-[#1c3a5e] bg-[radial-gradient(circle_at_50%_30%,#6da9d8,#194a84_75%)]">
          <svg width="22" height="20" viewBox="0 0 22 20">
            <path d="M1 3c3-1 6-1 9 0v7c-3-1-6-1-9 0z" fill="#e5533b" />
            <path d="M12 3c3 1 6 1 9-1v7c-3 2-6 2-9 1z" fill="#8dc24b" />
            <path d="M1 12c3-1 6-1 9 0v7c-3-1-6-1-9 0z" fill="#3f9ae0" />
            <path d="M12 12c3 1 6 1 9-1v7c-3 2-6 2-9 1z" fill="#f4c238" />
          </svg>
        </div>
      </div>
      <TaskButton><FirefoxIcon /></TaskButton>
      <div className="relative flex w-[66px] shrink-0 justify-center"><ExplorerIcon /></div>
      <TaskButton active><ExcelTaskIcon /></TaskButton>
      <div className="relative ml-auto flex h-full items-center text-white">
        <svg width="17" height="16" viewBox="0 0 17 16"><rect x="0.500" y="5.500" width="15" height="9" rx="1" fill="#c9d2dc" stroke="#eef2f6" /><path d="M3 8h10M3 10h10M5 12h6" stroke="#5b6a7a" /><path d="M5 5c2-3 6 0 9-3" fill="none" stroke="#dfe5ea" /></svg>
        <svg width="8" height="4" viewBox="0 0 8 4" className="ml-[16px]"><path d="M0 4l4-4 4 4z" fill="#fff" /></svg>
        <svg width="16" height="16" viewBox="0 0 16 16" className="ml-[12px]"><path d="M1 1v14" stroke="#fff" strokeWidth="1.500" /><path d="M2 2h8l1 2 4-1-2 4-3 1-1-2H2z" fill="#fff" /></svg>
        <svg width="16" height="16" viewBox="0 0 16 16" className="ml-[8px]"><rect x="3.500" y="3.500" width="11" height="8" fill="#1c3f68" stroke="#fff" /><rect x="1" y="0" width="3" height="6" fill="#fff" /><path d="M6 14h6" stroke="#fff" strokeWidth="1.500" /></svg>
        <svg width="14" height="14" viewBox="0 0 14 14" className="ml-[9px]"><path d="M1 5h3l4-4v12L4 9H1z" fill="#e6ebf0" /><path d="M10.500 5c1 1.300 1 2.700 0 4" fill="none" stroke="#dfe7ef" /></svg>
        <div className="ml-[13px] mr-[4px] w-[60px] text-center text-[11.5px] leading-[16px]">
          <div>15:25</div>
          <div>9-7-2012</div>
        </div>
        <div className="h-[38px] w-[14px] rounded-[2px] border border-[#355f8c] bg-[linear-gradient(180deg,#7a98b6,#1f4f85_40%,#1a4a80)]" />
      </div>
    </div>
  );
}

export default function App() {
  return (
    <div className="flex h-[1080px] w-[1920px] flex-col overflow-hidden bg-white">
      <TitleBar />
      <Ribbon />
      <FormulaBar />
      <div className="flex h-[839px] shrink-0">
        <SheetGrid />
        <VerticalScroll />
      </div>
      <SheetTabs />
      <StatusBar />
      <Taskbar />
    </div>
  );
}
